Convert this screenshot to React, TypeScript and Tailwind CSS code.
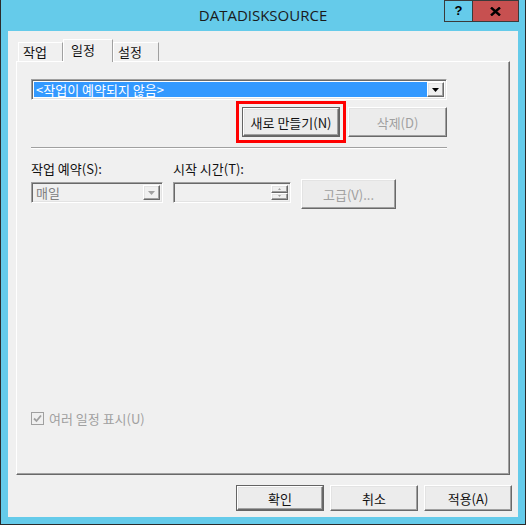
import type { ReactNode } from "react";

const ko = "font-['Noto_Sans_CJK_KR','Noto_Sans',sans-serif]";

// raised 3D frame used by push buttons and the small arrow buttons
const raised =
  "border border-t-white border-l-white border-r-[#696969] border-b-[#696969] shadow-[inset_-1px_-1px_#a0a0a0,inset_1px_1px_#e3e3e3]";

// sunken frame of edit/combo fields
const sunken =
  "border border-t-[#a0a0a0] border-l-[#a0a0a0] border-r-white border-b-white shadow-[inset_1px_1px_#696969,inset_-1px_-1px_#e3e3e3]";

function Button({
  children,
  disabled,
  isDefault,
  className = "",
}: {
  children: ReactNode;
  disabled?: boolean;
  isDefault?: boolean;
  className?: string;
}) {
  return (
    <div className={`${isDefault ? "border border-[#646464]" : ""} ${className}`}>
      <button
        type="button"
        className={`flex h-full w-full items-center justify-center bg-[#ececec] text-[13px] leading-none ${raised} ${
          disabled ? "text-[#a0a0a0]" : "text-[#111]"
        }`}
      >
        {children}
      </button>
    </div>
  );
}

function Arrow({ color = "#000" }: { color?: string }) {
  return (
    <svg width="7" height="4" viewBox="0 0 7 4">
      <path d="M0 0h7L3.5 4z" fill={color} />
    </svg>
  );
}

function Tab({ label, active, width }: { label: string; active?: boolean; width: string }) {
  return (
    <div
      className={`${width} flex items-start border-l border-t border-l-white border-t-white border-r border-r-[#a0a0a0] text-[13px] leading-[16px] text-[#111] ${
        active
          ? "relative z-10 -mb-px h-[23px] bg-[#f0f0f0] pl-[7px] pt-[2px]"
          : "h-[19px] pl-[4px] pt-[1px]"
      }`}
    >
      {label}
    </div>
  );
}

export default function App() {
  return (
    <div
      className={`flex h-[525px] w-[526px] flex-col border-x border-b border-[#2b2b2b] bg-[#65cbea] ${ko}`}
    >
      {/* caption */}
      <div className="relative flex h-[31px] shrink-0 items-center justify-center">
        <span className="font-['Open_Sans',sans-serif] text-[15px] text-[#1a1a1a]">
          DATADISKSOURCE
        </span>
        <div className="absolute right-[6px] top-0 flex">
          <div className="flex h-[22px] w-[29px] items-center justify-center border border-[#3a3a3a] font-['Liberation_Sans',sans-serif] text-[13px] font-bold text-black">
            ?
          </div>
          <div className="-ml-px flex h-[22px] w-[47px] items-center justify-center border border-[#3a3a3a] bg-[#c75050]">
            <svg width="11" height="9" viewBox="0 0 11 9">
              <path d="M1 0.5l9 8M10 0.5l-9 8" stroke="#000" strokeWidth="2.4" />
            </svg>
          </div>
        </div>
      </div>

      {/* client area */}
      <div className="mx-[7px] mb-[7px] flex flex-1 flex-col bg-[#f0f0f0]">
        <div className="px-[8px] pt-[8px]">
          <div className="flex items-end pl-[2px]">
            <Tab label="작업" width="w-[45px]" />
            <Tab label="일정" width="w-[50px]" active />
            <Tab label="설정" width="w-[46px]" />
          </div>

          <div
            className={`flex h-[414px] flex-col border border-t-white border-l-white border-r-[#696969] border-b-[#696969] pl-[14px] pt-[17px] pb-[48px] shadow-[inset_-1px_-1px_#a0a0a0]`}
          >
            <div className="flex w-[416px] flex-col">
              {/* schedule list */}
              <div className={`flex h-[21px] bg-white p-[2px] ${sunken}`}>
                <div className="flex flex-1 items-center bg-[#3399ff] pl-[2px] text-[13px] leading-none text-white">
                  &lt;작업이 예약되지 않음&gt;
                </div>
                <div className={`flex w-[17px] items-center justify-center bg-[#f0f0f0] ${raised}`}>
                  <Arrow />
                </div>
              </div>

              <div className="mt-[7px] flex justify-end gap-[8px]">
                <div className="relative">
                  <Button isDefault className="h-[30px] w-[98px]">
                    새로 만들기(N)
                  </Button>
                  <span className="pointer-events-none absolute -inset-[6px] border-[3px] border-[#ff0000]" />
                </div>
                <Button disabled className="h-[30px] w-[99px]">
                  삭제(D)
                </Button>
              </div>

              <div className="mt-[10px] h-[2px] border-t border-b border-t-[#a0a0a0] border-b-white" />
            </div>

            {/* schedule settings */}
            <div className="mt-[12px] flex items-start gap-[10px]">
              <div className="flex w-[132px] flex-col gap-[6px]">
                <span className="text-[13px] leading-[15px] text-[#111]">작업 예약(S):</span>
                <div className={`flex h-[21px] items-stretch bg-[#f0f0f0] p-[2px] ${sunken}`}>
                  <span className="flex flex-1 items-center pl-[2px] text-[13px] leading-none text-[#808080]">
                    매일
                  </span>
                  <div className={`flex w-[17px] items-center justify-center bg-[#f0f0f0] ${raised}`}>
                    <Arrow color="#a0a0a0" />
                  </div>
                </div>
              </div>

              <div className="flex w-[118px] flex-col gap-[6px]">
                <span className="text-[13px] leading-[15px] text-[#111]">시작 시간(T):</span>
                <div className={`flex h-[21px] justify-end bg-[#f0f0f0] p-[2px] ${sunken}`}>
                  <div className="flex w-[17px] flex-col">
                    <div className={`flex flex-1 items-center justify-center ${raised}`}>
                      <svg width="3" height="2" viewBox="0 0 3 2">
                        <path d="M0 2h3L1.5 0z" fill="#a0a0a0" />
                      </svg>
                    </div>
                    <div className={`flex flex-1 items-center justify-center ${raised}`}>
                      <svg width="3" height="2" viewBox="0 0 3 2">
                        <path d="M0 0h3L1.5 2z" fill="#a0a0a0" />
                      </svg>
                    </div>
                  </div>
                </div>
              </div>

              <div className="pt-[18px]">
                <Button disabled className="h-[30px] w-[95px]">
                  고급(V)...
                </Button>
              </div>
            </div>

            {/* show multiple schedules */}
            <div className="mt-auto flex items-center gap-[5px]">
              <div className="flex h-[13px] w-[13px] items-center justify-center border border-[#a0a0a0] bg-[#f0f0f0]">
                <svg width="9" height="9" viewBox="0 0 9 9">
                  <path d="M1 4.5l2.5 2.5L8 1.5" fill="none" stroke="#a0a0a0" strokeWidth="1.8" />
                </svg>
              </div>
              <span className="text-[13px] leading-[15px] text-[#a0a0a0]">여러 일정 표시(U)</span>
            </div>
          </div>
        </div>

        {/* dialog buttons */}
        <div className="mt-[10px] flex justify-end gap-[6px] pr-[6px]">
          <Button isDefault className="h-[26px] w-[88px]">
            확인
          </Button>
          <Button className="h-[26px] w-[88px]">취소</Button>
          <Button className="h-[26px] w-[88px]">적용(A)</Button>
        </div>
      </div>
    </div>
  );
}
